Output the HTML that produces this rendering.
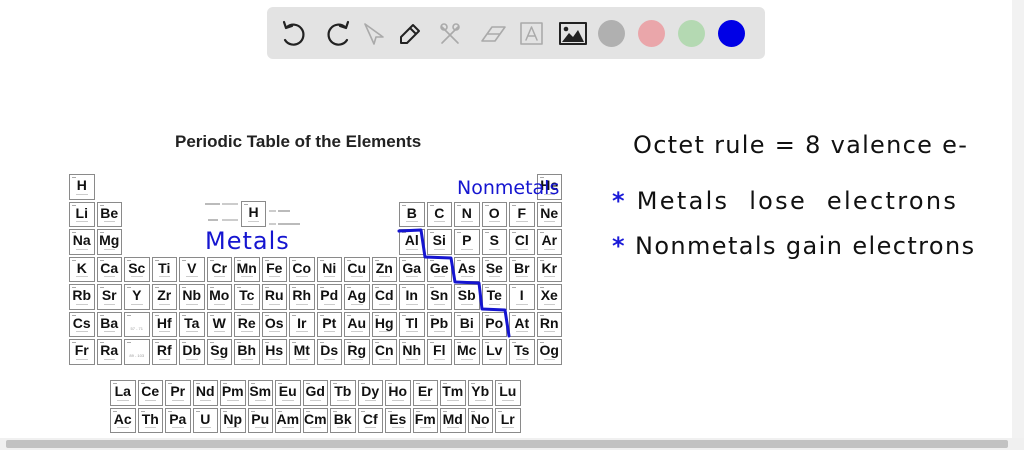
<!DOCTYPE html>
<html><head><meta charset="utf-8">
<style>
*{margin:0;padding:0;box-sizing:border-box}
body{width:1024px;height:450px;overflow:hidden;background:#fff;position:relative;font-family:"Liberation Sans",sans-serif}
.tb{position:absolute;left:267px;top:7px;width:498px;height:52px;background:#e3e3e3;border-radius:6px}
.dot{position:absolute;top:13px;width:27px;height:27px;border-radius:50%}
.title{position:absolute;left:175px;top:132px;width:282px;font-size:17px;font-weight:bold;color:#222;white-space:nowrap}
.grid{position:absolute;display:grid;grid-template-columns:repeat(18,25.5px);grid-auto-rows:25.5px;gap:2px}
.lg{grid-template-columns:repeat(15,25.5px)}
.c{border:1px solid #8a8a8a;position:relative;text-align:center;font-weight:bold;font-size:14px;line-height:14px;padding-top:3px;color:#111}
.c:before{content:"";position:absolute;left:2px;top:2px;width:4px;height:1px;background:#aaa}
.c:after{content:"";position:absolute;left:6px;right:6px;bottom:2px;height:2px;border-top:1px solid #ccc}
.c.p{font-size:4px;font-weight:normal;color:#999;padding-top:9px}
.c.p:after{display:none}
.hw{position:absolute;font-size:24px;color:#111;white-space:nowrap;font-family:"DejaVu Sans",sans-serif;font-weight:normal}
.star{color:#1a1ad8;font-weight:bold}
</style></head><body>
<div class="tb">
<svg width="498" height="52" style="position:absolute;left:0;top:0" fill="none" stroke-linecap="round" stroke-linejoin="round">
<g stroke="#222" stroke-width="2.2">
<path d="M20 20 A10 10 0 1 1 18 33"/><path d="M17 15 L19 21 L25 19"/>
<path d="M78 20 A10 10 0 1 0 80 33"/><path d="M81 15 L79 21 L73 19"/>
</g>
<path d="M98 17 L107 37 L109 30 L116 30 Z" stroke="#aaa" stroke-width="1.6"/>
<path d="M134 36 L134 30 L146 18 L152 24 L140 36 Z M143 21 L149 27" stroke="#222" stroke-width="2"/>
<g stroke="#aaa" stroke-width="1.6"><path d="M175 20 L191 36 M191 20 L175 36"/><circle cx="177" cy="20" r="3"/><circle cx="189" cy="20" r="3"/></g>
<path d="M215 34 L225 20 L238 20 L228 34 Z M220 27 L233 27" stroke="#aaa" stroke-width="1.6"/>
<rect x="254" y="16" width="21" height="21" stroke="#aaa" stroke-width="1.6"/><path d="M259 33 L264.5 20 L270 33 M261 29 L268 29" stroke="#aaa" stroke-width="1.5"/>
<rect x="293" y="16" width="26" height="21" stroke="#222" stroke-width="2"/>
<path d="M295 35 L302 26 L306 30 L311 23 L317 35 Z" fill="#222"/><circle cx="299" cy="22" r="2.3" fill="#222"/>
</svg>
<div class="dot" style="left:331px;background:#b0b0b0"></div>
<div class="dot" style="left:371px;background:#eaa6aa"></div>
<div class="dot" style="left:411px;background:#b4d9b2"></div>
<div class="dot" style="left:451px;background:#0000e6"></div>
</div>

<div class="title">Periodic Table of the Elements</div>

<div class="grid" style="left:69px;top:174px">
<div class="c">H</div><div class="c" style="grid-column:18">He</div>
<div class="c">Li</div><div class="c">Be</div><div class="c" style="grid-column:13">B</div><div class="c">C</div><div class="c">N</div><div class="c">O</div><div class="c">F</div><div class="c">Ne</div>
<div class="c">Na</div><div class="c">Mg</div><div class="c" style="grid-column:13">Al</div><div class="c">Si</div><div class="c">P</div><div class="c">S</div><div class="c">Cl</div><div class="c">Ar</div>
<div class="c">K</div><div class="c">Ca</div><div class="c">Sc</div><div class="c">Ti</div><div class="c">V</div><div class="c">Cr</div><div class="c">Mn</div><div class="c">Fe</div><div class="c">Co</div><div class="c">Ni</div><div class="c">Cu</div><div class="c">Zn</div><div class="c">Ga</div><div class="c">Ge</div><div class="c">As</div><div class="c">Se</div><div class="c">Br</div><div class="c">Kr</div>
<div class="c">Rb</div><div class="c">Sr</div><div class="c">Y</div><div class="c">Zr</div><div class="c">Nb</div><div class="c">Mo</div><div class="c">Tc</div><div class="c">Ru</div><div class="c">Rh</div><div class="c">Pd</div><div class="c">Ag</div><div class="c">Cd</div><div class="c">In</div><div class="c">Sn</div><div class="c">Sb</div><div class="c">Te</div><div class="c">I</div><div class="c">Xe</div>
<div class="c">Cs</div><div class="c">Ba</div><div class="c p">57 - 71</div><div class="c">Hf</div><div class="c">Ta</div><div class="c">W</div><div class="c">Re</div><div class="c">Os</div><div class="c">Ir</div><div class="c">Pt</div><div class="c">Au</div><div class="c">Hg</div><div class="c">Tl</div><div class="c">Pb</div><div class="c">Bi</div><div class="c">Po</div><div class="c">At</div><div class="c">Rn</div>
<div class="c">Fr</div><div class="c">Ra</div><div class="c p">89 - 103</div><div class="c">Rf</div><div class="c">Db</div><div class="c">Sg</div><div class="c">Bh</div><div class="c">Hs</div><div class="c">Mt</div><div class="c">Ds</div><div class="c">Rg</div><div class="c">Cn</div><div class="c">Nh</div><div class="c">Fl</div><div class="c">Mc</div><div class="c">Lv</div><div class="c">Ts</div><div class="c">Og</div>
</div>

<div class="grid lg" style="left:110px;top:380px">
<div class="c">La</div><div class="c">Ce</div><div class="c">Pr</div><div class="c">Nd</div><div class="c">Pm</div><div class="c">Sm</div><div class="c">Eu</div><div class="c">Gd</div><div class="c">Tb</div><div class="c">Dy</div><div class="c">Ho</div><div class="c">Er</div><div class="c">Tm</div><div class="c">Yb</div><div class="c">Lu</div>
<div class="c">Ac</div><div class="c">Th</div><div class="c">Pa</div><div class="c">U</div><div class="c">Np</div><div class="c">Pu</div><div class="c">Am</div><div class="c">Cm</div><div class="c">Bk</div><div class="c">Cf</div><div class="c">Es</div><div class="c">Fm</div><div class="c">Md</div><div class="c">No</div><div class="c">Lr</div>
</div>

<div class="c" style="position:absolute;left:241px;top:201px;width:25px;height:26px">H</div>
<svg width="1024" height="450" style="position:absolute;left:0;top:0" fill="none">
<g stroke="#999" stroke-width="1"><path d="M222 204 H238 M222 220 H238 M269 211 H276 M269 224 H276"/></g>
<g stroke="#bbb" stroke-width="2"><path d="M205 204 H220 M208 220 H218 M278 211 H290 M278 224 H300"/></g>
<path d="M399 231 L421 230 L425 257 L451 258 L455 282 L479 283 L482 309 L505 310 L509 336" stroke="#1515d0" stroke-width="3" stroke-linecap="round" stroke-linejoin="round"/>
</svg>
<div style="position:absolute;left:205px;top:227px;font-size:24px;color:#1515d0;font-family:'DejaVu Sans',sans-serif;letter-spacing:1px">Metals</div>
<div style="position:absolute;left:457px;top:177px;font-size:19px;color:#1515d0;font-family:'DejaVu Sans',sans-serif">Nonmetals</div>

<div class="hw" style="left:633px;top:131px;letter-spacing:1.3px">Octet rule = 8 valence e-</div>
<div class="hw" style="left:612px;top:187px;letter-spacing:2.3px"><span class="star">*</span> Metals &nbsp;lose &nbsp;electrons</div>
<div class="hw" style="left:612px;top:232px;letter-spacing:1.4px"><span class="star">*</span> Nonmetals gain electrons</div>

<div style="position:absolute;left:1012px;top:0;width:12px;height:438px;background:#f2f2f2"></div>
<div style="position:absolute;left:0;top:438px;width:1024px;height:12px;background:#f0f0f0"></div>
<div style="position:absolute;left:6px;top:440px;width:1002px;height:8px;background:#c2c2c2;border-radius:2px"></div>
</body></html>
